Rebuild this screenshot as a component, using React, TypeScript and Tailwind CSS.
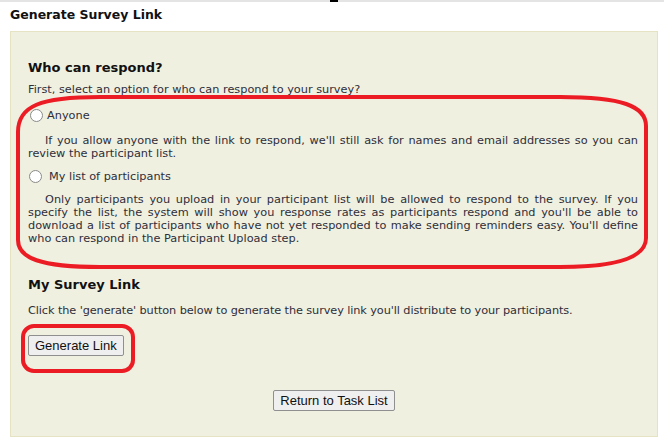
import React from "react";

const font = "font-['DejaVu_Sans','Liberation_Sans',sans-serif]";

const Radio = () => (
  <span className="inline-block w-[13px] h-[13px] rounded-full border border-[#8a8a8a] bg-white shrink-0" />
);

const App = () => {
  return (
    <div className={`relative w-[664px] h-[441px] bg-white overflow-hidden ${font}`}>
      <div className="h-[2px] bg-[#e4e4e4] flex">
        <div className="ml-[330px] w-[8px] h-[2px] bg-black" />
      </div>
      <h1 className="ml-[10px] mt-[5px] text-[12.5px] leading-[16px] font-bold text-[#111]">
        Generate Survey Link
      </h1>
      <div className="ml-[10px] mt-[8px] w-[648px] h-[406px] bg-[#f0f0e0] border border-[#e6e2c4] pl-[17px] pr-[19px] pt-[27px] text-[11.3px] leading-[13px] text-[#2e2e3a]">
        <h2 className="text-[13px] leading-[18px] font-bold text-[#111]">Who can respond?</h2>
        <p className="mt-[6px]">First, select an option for who can respond to your survey?</p>
        <label className="mt-[13px] ml-[2px] flex items-center gap-[4px]">
          <Radio />
          <span>Anyone</span>
        </label>
        <p className="mt-[12px] text-justify indent-[17px]">
          If you allow anyone with the link to respond, we'll still ask for names and email addresses so you can review
          the participant list.
        </p>
        <label className="mt-[10px] ml-[1px] flex items-center gap-[7px]">
          <Radio />
          <span>My list of participants</span>
        </label>
        <p className="mt-[10px] text-justify indent-[17px]">
          Only participants you upload in your participant list will be allowed to respond to the survey. If you specify
          the list, the system will show you response rates as participants respond and you'll be able to download a
          list of participants who have not yet responded to make sending reminders easy. You'll define who can respond
          in the Participant Upload step.
        </p>
        <h2 className="mt-[31px] text-[13px] leading-[18px] font-bold text-[#111]">My Survey Link</h2>
        <p className="mt-[10px] tracking-[-0.1px]">Click the 'generate' button below to generate the survey link you'll distribute to your participants.</p>
        <button className="mt-[18px] px-[6px] h-[21px] bg-[#efefef] border border-[#8f8f8f] rounded-[2px] text-[13px] leading-[16px] text-[#111] font-['Liberation_Sans',sans-serif]">
          Generate Link
        </button>
        <div className="mt-[34px] flex justify-center pl-[2px]">
          <button className="px-[6px] h-[21px] bg-[#efefef] border border-[#8f8f8f] rounded-[2px] text-[13px] leading-[16px] text-[#111] font-['Liberation_Sans',sans-serif]">
            Return to Task List
          </button>
        </div>
      </div>
      <svg className="absolute inset-0 pointer-events-none" width="664" height="441" viewBox="0 0 664 441">
        <path
          d="M18,132 C18,106 40,97 100,97 L560,97 C622,97 646,106 646,126 L646,238 C646,256 622,267 560,267 L100,267 C40,267 18,258 18,240 Z"
          fill="none"
          stroke="#ec1c24"
          strokeWidth="4"
        />
        <rect x="23" y="326" width="110" height="45" rx="11" fill="none" stroke="#ec1c24" strokeWidth="4" />
      </svg>
    </div>
  );
};

export default App;
